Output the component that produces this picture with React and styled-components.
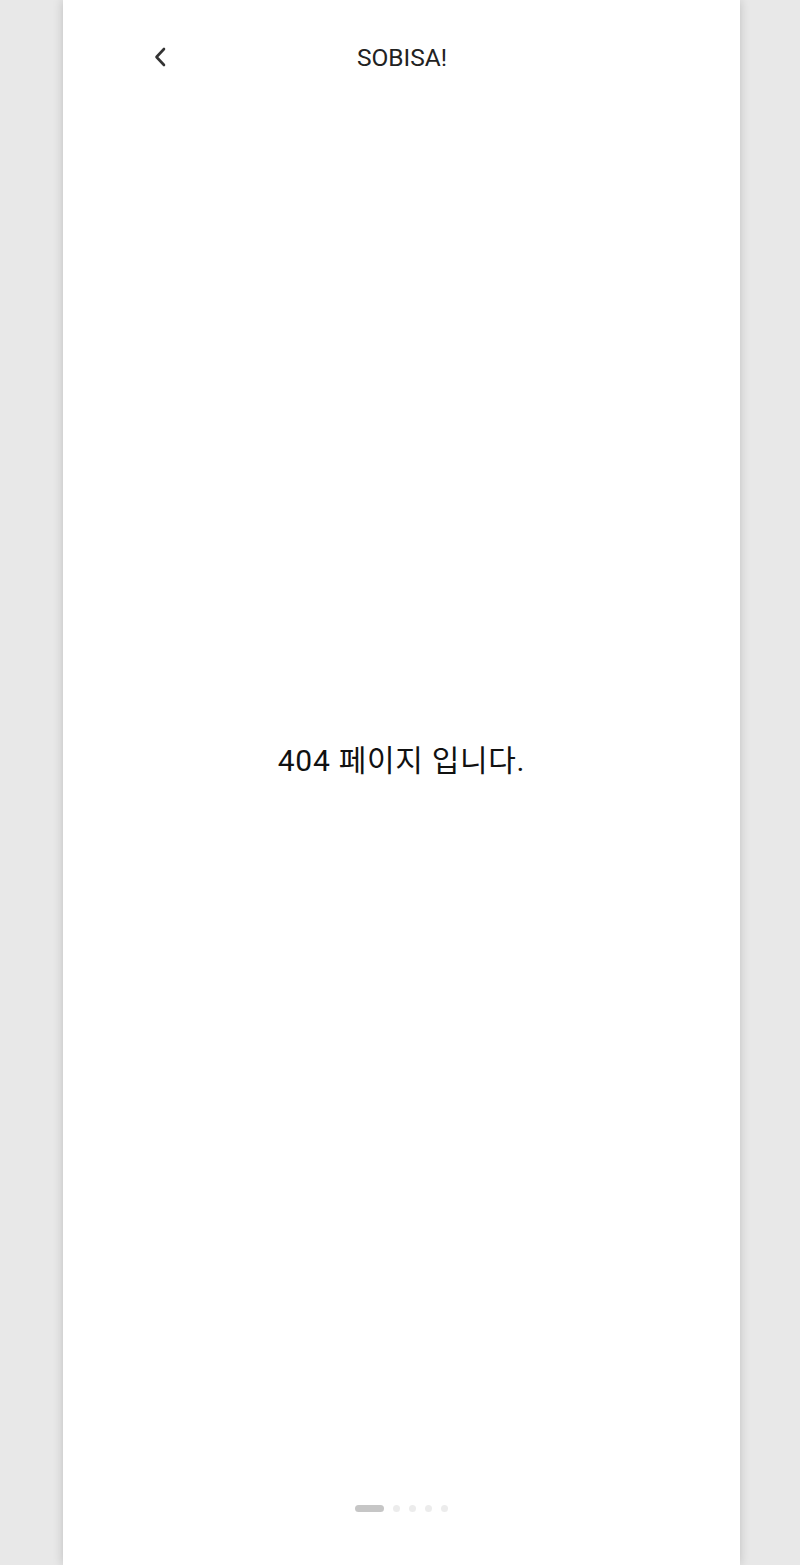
import React from 'react';
import styled, { createGlobalStyle } from 'styled-components';

const GlobalStyle = createGlobalStyle`
  * { box-sizing: border-box; }
  body {
    margin: 0;
    padding-left: 3px;
    background: #e8e8e8;
    font-family: Roboto, "Noto Sans CJK KR", sans-serif;
  }
`;

const Page = styled.div`
  width: 677px;
  min-height: 100vh;
  margin: 0 auto;
  background: #ffffff;
  box-shadow: 0 0 10px rgba(0, 0, 0, 0.18);
  display: flex;
  flex-direction: column;
`;

const Header = styled.header`
  height: 114px;
  display: grid;
  grid-template-columns: 1fr auto 1fr;
  align-items: center;
  padding: 0 0 0 85px;
`;

const BackButton = styled.button`
  width: 24px;
  height: 28px;
  padding: 0;
  border: none;
  background: none;
  display: flex;
  align-items: center;
  justify-content: center;
  cursor: pointer;
  justify-self: start;
`;

const Title = styled.h1`
  margin: 0;
  font-family: Roboto, sans-serif;
  font-size: 24.5px;
  font-weight: 400;
  color: #222222;
  transform: translateX(-42px);
`;

const Main = styled.main`
  flex: 1;
  display: flex;
  align-items: center;
  justify-content: center;
`;

const Message = styled.p`
  margin: 0;
  font-family: Roboto, "Noto Sans CJK KR", sans-serif;
  font-size: 30px;
  font-weight: 400;
  letter-spacing: 0.7px;
  color: #111111;
`;

const Footer = styled.footer`
  height: 163px;
  display: flex;
  justify-content: center;
  padding-top: 103px;
  gap: 9px;
`;

const Dot = styled.span`
  width: ${p => (p.$active ? '29px' : '7px')};
  height: 7px;
  border-radius: 4px;
  background: ${p => (p.$active ? '#c6c6c6' : '#ececec')};
`;

const ChevronLeft = () => (
  <svg width="14" height="22" viewBox="0 0 14 22" fill="none">
    <path d="M11 3 L3.5 11 L11 19" stroke="#333333" strokeWidth="2.6" strokeLinecap="round" strokeLinejoin="round" />
  </svg>
);

const App = () => {
  const dots = [true, false, false, false, false];
  return (
    <>
      <GlobalStyle />
      <Page>
        <Header>
          <BackButton aria-label="뒤로">
            <ChevronLeft />
          </BackButton>
          <Title>SOBISA!</Title>
          <div />
        </Header>
        <Main>
          <Message>404 페이지 입니다.</Message>
        </Main>
        <Footer>
          {dots.map((active, i) => (
            <Dot key={i} $active={active} />
          ))}
        </Footer>
      </Page>
    </>
  );
};

export default App;
